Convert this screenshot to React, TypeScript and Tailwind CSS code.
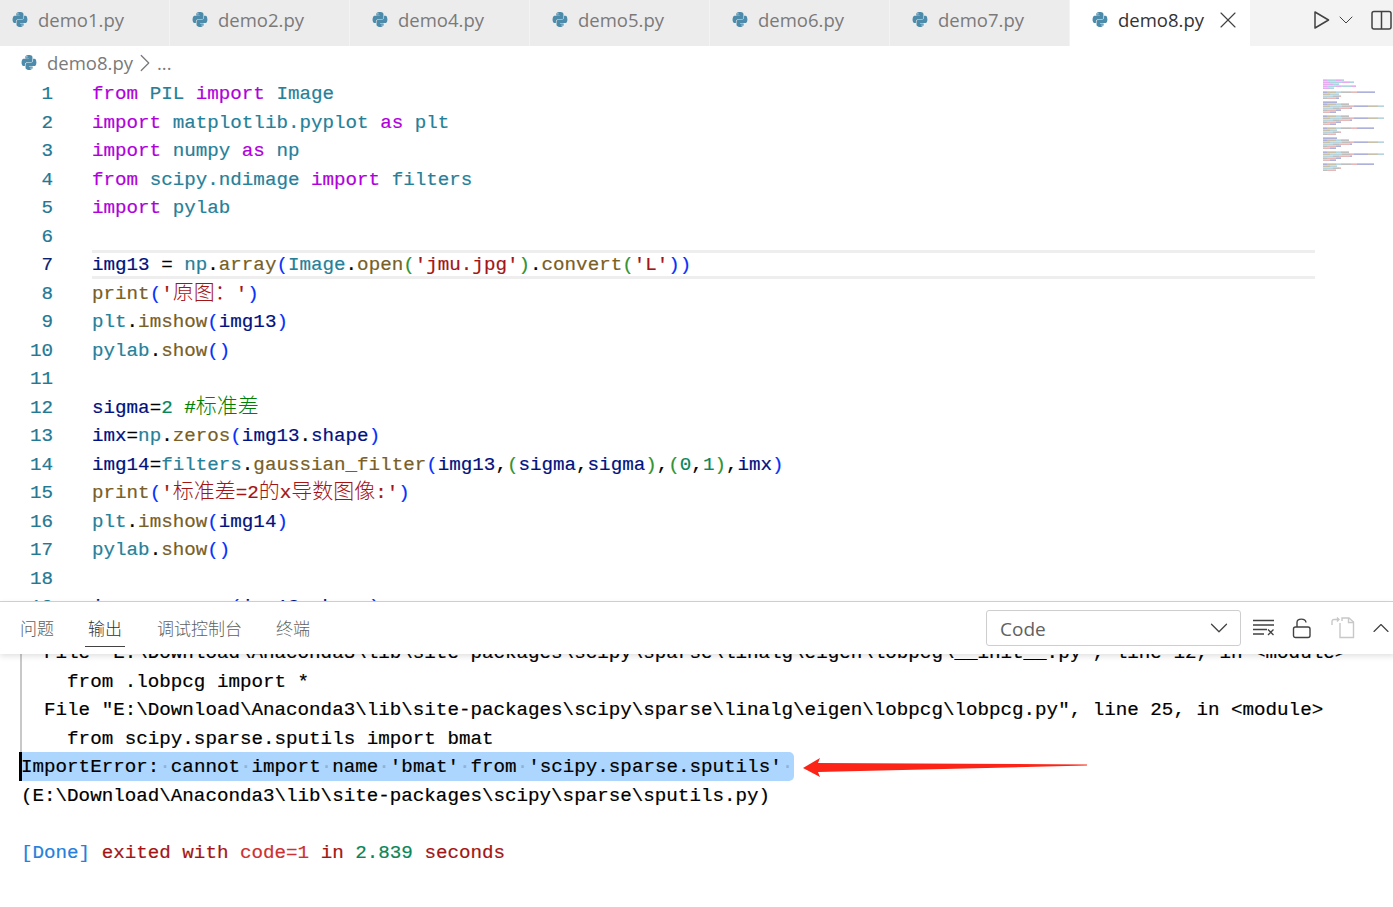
import { FaPython } from 'react-icons/fa';
import { ChevronDown, ChevronRight, ChevronUp, X } from 'lucide-react';

type Tok = [string, string?];

const KW = 'text-[#af00db]';
const MOD = 'text-[#267f99]';
const FN = 'text-[#795e26]';
const VAR = 'text-[#001080]';
const STR = 'text-[#a31515]';
const NUM = 'text-[#098658]';
const COM = 'text-[#008000]';
const B1 = 'text-[#0431fa]';
const B2 = 'text-[#319331]';
const CJK = 'cjk';

const code: Tok[][] = [
  [['from', KW], [' '], ['PIL', MOD], [' '], ['import', KW], [' '], ['Image', MOD]],
  [['import', KW], [' '], ['matplotlib.pyplot', MOD], [' '], ['as', KW], [' '], ['plt', MOD]],
  [['import', KW], [' '], ['numpy', MOD], [' '], ['as', KW], [' '], ['np', MOD]],
  [['from', KW], [' '], ['scipy.ndimage', MOD], [' '], ['import', KW], [' '], ['filters', MOD]],
  [['import', KW], [' '], ['pylab', MOD]],
  [],
  [['img13', VAR], [' = '], ['np', MOD], ['.'], ['array', FN], ['(', B1], ['Image', MOD], ['.'], ['open', FN], ['(', B2], ["'jmu.jpg'", STR], [')', B2], ['.'], ['convert', FN], ['(', B2], ["'L'", STR], ['))', B1]],
  [['print', FN], ['(', B1], ["'", STR], ['原图：', CJK], ["'", STR], [')', B1]],
  [['plt', MOD], ['.'], ['imshow', FN], ['(', B1], ['img13', VAR], [')', B1]],
  [['pylab', MOD], ['.'], ['show', FN], ['()', B1]],
  [],
  [['sigma', VAR], ['='], ['2', NUM], [' '], ['#', COM], ['标准差', 'cjk-com']],
  [['imx', VAR], ['='], ['np', MOD], ['.'], ['zeros', FN], ['(', B1], ['img13', VAR], ['.'], ['shape', VAR], [')', B1]],
  [['img14', VAR], ['='], ['filters', MOD], ['.'], ['gaussian_filter', FN], ['(', B1], ['img13', VAR], [','], ['(', B2], ['sigma', VAR], [','], ['sigma', VAR], [')', B2], [','], ['(', B2], ['0', NUM], [','], ['1', NUM], [')', B2], [','], ['imx', VAR], [')', B1]],
  [['print', FN], ['(', B1], ["'", STR], ['标准差', CJK], ['=2', STR], ['的', CJK], ['x', STR], ['导数图像', CJK], [":'", STR], [')', B1]],
  [['plt', MOD], ['.'], ['imshow', FN], ['(', B1], ['img14', VAR], [')', B1]],
  [['pylab', MOD], ['.'], ['show', FN], ['()', B1]],
  [],
  [['imx', VAR], ['='], ['np', MOD], ['.'], ['zeros', FN], ['(', B1], ['img13', VAR], ['.'], ['shape', VAR], [')', B1]],
];

const tabs = ['demo1.py', 'demo2.py', 'demo4.py', 'demo5.py', 'demo6.py', 'demo7.py'];

const minimapRows = [20, 30, 15, 32, 10, 0, 52, 15, 17, 15, 0, 13, 25, 60, 28, 17, 12, 0, 25, 60, 28, 17, 12, 0, 50, 13, 17, 12, 0, 13, 25, 60, 28, 17, 12, 0, 25, 60, 28, 17, 12, 0, 50, 13, 17, 12];
const minimapColors = ['#7f86c4', '#a99c78', '#8fbccb', '#9a9a9a', '#d98f8f', '#7f86c4'];

function Tokens({ line }: { line: Tok[] }) {
  return (
    <>
      {line.map(([text, cls], i) => {
        if (cls === CJK) {
          return <span key={i} className="text-[21px] leading-none font-light text-[#a31515] [-webkit-text-stroke:0] font-['Noto_Sans_CJK_SC',sans-serif]">{text}</span>;
        }
        if (cls === 'cjk-com') {
          return <span key={i} className="text-[21px] leading-none font-light text-[#008000] [-webkit-text-stroke:0] font-['Noto_Sans_CJK_SC',sans-serif]">{text}</span>;
        }
        return <span key={i} className={cls}>{text}</span>;
      })}
    </>
  );
}

// pale word-sized dashes, the way the minimap smears the code
function Minimap() {
  return (
    <svg className="absolute left-[1323px] top-[79px]" width="62" height="96" viewBox="0 0 62 96">
      {minimapRows.map((w, i) => {
        const dashes = [];
        let x = 0;
        let n = 0;
        while (x < w) {
          const len = Math.min(3 + ((i * 3 + n * 5) % 9), w - x);
          const fill = i < 5 ? (n % 2 === 0 ? '#d77be8' : '#7fbdd0') : minimapColors[(i + n) % minimapColors.length];
          dashes.push(<rect key={n} x={x} y={i * 2 + 0.4} width={len + 1} height="1.5" fill={fill} opacity="0.7" />);
          x += len + 1;
          n += 1;
        }
        return <g key={i}>{dashes}</g>;
      })}
    </svg>
  );
}

function SelectedLine() {
  const words = ['ImportError:', 'cannot', 'import', 'name', "'bmat'", 'from', "'scipy.sparse.sputils'"];
  return (
    <div className="h-[28.5px] w-[773px] bg-[#add6ff] rounded-r-[5px] rounded-bl-[2px] whitespace-pre">
      {words.map((w, i) => (
        <span key={i}>
          {w}
          <span className="text-[#8fb2d6]">·</span>
        </span>
      ))}
    </div>
  );
}

export default function App() {
  return (
    <div className="relative flex h-[907px] w-[1393px] flex-col overflow-hidden bg-white font-['Liberation_Mono',monospace] text-[19.22px] text-black">
      {/* tab strip, scrolled 10px to the left like the real one */}
      <div className="-ml-[10px] flex h-[46px] w-[1403px] shrink-0 bg-[#f3f3f3] font-['Open_Sans',sans-serif] text-[18.5px]">
        {tabs.map((t) => (
          <div key={t} className="flex w-[180px] shrink-0 items-center border-r border-[#f3f3f3] bg-[#ececec] pb-[7px] pl-[22px] text-[#7a7a7a]">
            <FaPython className="mr-[10px] h-[17px] w-[16px] text-[#4d8bab]" />
            {t}
          </div>
        ))}
        <div className="flex w-[180px] shrink-0 items-center bg-white pb-[7px] pl-[22px] text-[#333333]">
          <FaPython className="mr-[10px] h-[17px] w-[16px] text-[#4d8bab]" />
          demo8.py
          <X className="ml-[10px] h-[28px] w-[28px] text-[#424242]" strokeWidth={1} />
        </div>
        <div className="flex flex-1 items-center pb-[6px] pl-[63px]">
          <svg width="18" height="20" viewBox="0 0 18 20" fill="none" stroke="#424242" strokeWidth="1.5">
            <path d="M2 2 L15.5 10 L2 18 Z" strokeLinejoin="round" />
          </svg>
          <ChevronDown className="ml-[3px] h-[24px] w-[24px] text-[#424242]" strokeWidth={1} />
          <svg className="ml-[13px]" width="21" height="21" viewBox="0 0 21 21" fill="none" stroke="#424242" strokeWidth="1.5">
            <rect x="1" y="1.5" width="19" height="17.5" rx="2" />
            <path d="M10.5 1.5 V19" />
          </svg>
        </div>
      </div>

      {/* breadcrumb */}
      <div className="flex h-[33px] shrink-0 items-center pl-[21px] font-['Open_Sans',sans-serif] text-[18.5px] text-[#7a7a7a]">
        <FaPython className="mr-[10px] h-[17px] w-[16px] text-[#4d8bab]" />
        demo8.py
        <ChevronRight className="-ml-[3px] h-[30px] w-[30px]" strokeWidth={1} />
        <span className="-ml-[3px]">...</span>
      </div>

      {/* editor */}
      <div className="relative flex-1 overflow-hidden [-webkit-text-stroke:0.2px]">
        {code.map((line, i) => (
          <div key={i} className="flex h-[28.5px] items-start whitespace-pre leading-[30.5px]">
            <div className={`w-[53px] shrink-0 text-right ${i === 6 ? 'text-[#0b216f]' : 'text-[#237893]'}`}>{i + 1}</div>
            <div className={`ml-[39px] mr-[78px] h-full flex-1 ${i === 6 ? 'border-y-[3px] border-[#eeeeee] leading-[24.5px]' : ''}`}>
              <Tokens line={line} />
            </div>
          </div>
        ))}
      </div>

      {/* panel */}
      <div className="flex h-[306px] shrink-0 flex-col border-t border-[#d4d4d4]">
        <div className="relative z-10 -mr-[2px] flex h-[52px] shrink-0 items-center bg-white pl-[20px] font-['Noto_Sans_CJK_SC',sans-serif] text-[17px] font-light text-[#616161] shadow-[0_2px_6px_rgba(0,0,0,0.13)]">
          <span>问题</span>
          <span className="relative ml-[34px] text-[#333333]">
            输出
            <span className="absolute -left-[3px] -right-[3px] bottom-[-6px] h-px bg-[#424242]" />
          </span>
          <span className="ml-[35px]">调试控制台</span>
          <span className="ml-[34px]">终端</span>
          <div className="ml-auto flex h-[36px] w-[255px] items-center justify-between rounded-[3px] border border-[#cecece] pl-[13px] pr-[6px] font-['Open_Sans',sans-serif] text-[19px] font-normal text-[#616161]">
            <span className="pt-[3px]">Code</span>
            <ChevronDown className="h-[30px] w-[30px] text-[#424242]" strokeWidth={1} />
          </div>
          <svg className="ml-[11px]" width="23" height="20" viewBox="0 0 23 20" fill="none" stroke="#424242" strokeWidth="1.3">
            <path d="M1 2.5 H22 M1 7 H22 M1 11.5 H15 M1 16 H12 M16 11.5 L21.5 17 M21.5 11.5 L16 17" />
          </svg>
          <svg className="ml-[17px]" width="20" height="22" viewBox="0 0 20 22" fill="none" stroke="#424242" strokeWidth="1.4">
            <rect x="1.5" y="10" width="16.5" height="10.5" rx="2" />
            <path d="M5 10 V5.5 C5 1 13.5 1 14 5.5" />
          </svg>
          <svg className="ml-[19px]" width="24" height="22" viewBox="0 0 24 22" fill="none" stroke="#c8c8c8" strokeWidth="1.4">
            <path d="M9 6 V20.5 H22.5 V5 L18 1 H11 V4" />
            <path d="M17.5 1 V5.5 H22.5 M7.5 2.5 H3 C1.5 2.5 1 3.5 1 5 V8 M6 0.5 L8 2.5 L6 4.5" />
          </svg>
          <ChevronUp className="ml-[12px] h-[28px] w-[28px] text-[#424242]" strokeWidth={1} />
        </div>

        <div className="relative flex-1 overflow-hidden whitespace-pre pl-[21px] leading-[30.5px] [-webkit-text-stroke:0.2px]">
          <div className="absolute left-[20px] top-0 h-[98px] w-[2px] bg-[#c8c8c8]" />
          <div className="-mt-[16px] [&>div]:h-[28.5px]">
            <div>{'  File "E:\\Download\\Anaconda3\\lib\\site-packages\\scipy\\sparse\\linalg\\eigen\\lobpcg\\__init__.py", line 12, in <module>'}</div>
            <div>{'    from .lobpcg import *'}</div>
            <div>{'  File "E:\\Download\\Anaconda3\\lib\\site-packages\\scipy\\sparse\\linalg\\eigen\\lobpcg\\lobpcg.py", line 25, in <module>'}</div>
            <div>{'    from scipy.sparse.sputils import bmat'}</div>
            <div className="relative">
              <span className="absolute -left-[2px] top-0 z-10 h-[28.5px] w-[3px] bg-black" />
              <SelectedLine />
            </div>
            <div>{'(E:\\Download\\Anaconda3\\lib\\site-packages\\scipy\\sparse\\sputils.py)'}</div>
            <div />
            <div>
              <span className="text-[#267fdb]">[Done]</span>
              <span className="text-[#a31515]"> exited with </span>
              <span className="text-[#cd3131]">code=1</span>
              <span className="text-[#a31515]"> in </span>
              <span className="text-[#098658]">2.839</span>
              <span className="text-[#a31515]"> seconds</span>
            </div>
          </div>
        </div>
      </div>

      <Minimap />

      {/* red arrow annotation */}
      <svg className="absolute left-[800px] top-[755px]" width="290" height="25" viewBox="0 0 290 25">
        <path d="M3 13 L20 3 L18 8 L287 9.5 L287 10.5 L18 17 L20 22 Z" fill="#fb2416" />
      </svg>
    </div>
  );
}
